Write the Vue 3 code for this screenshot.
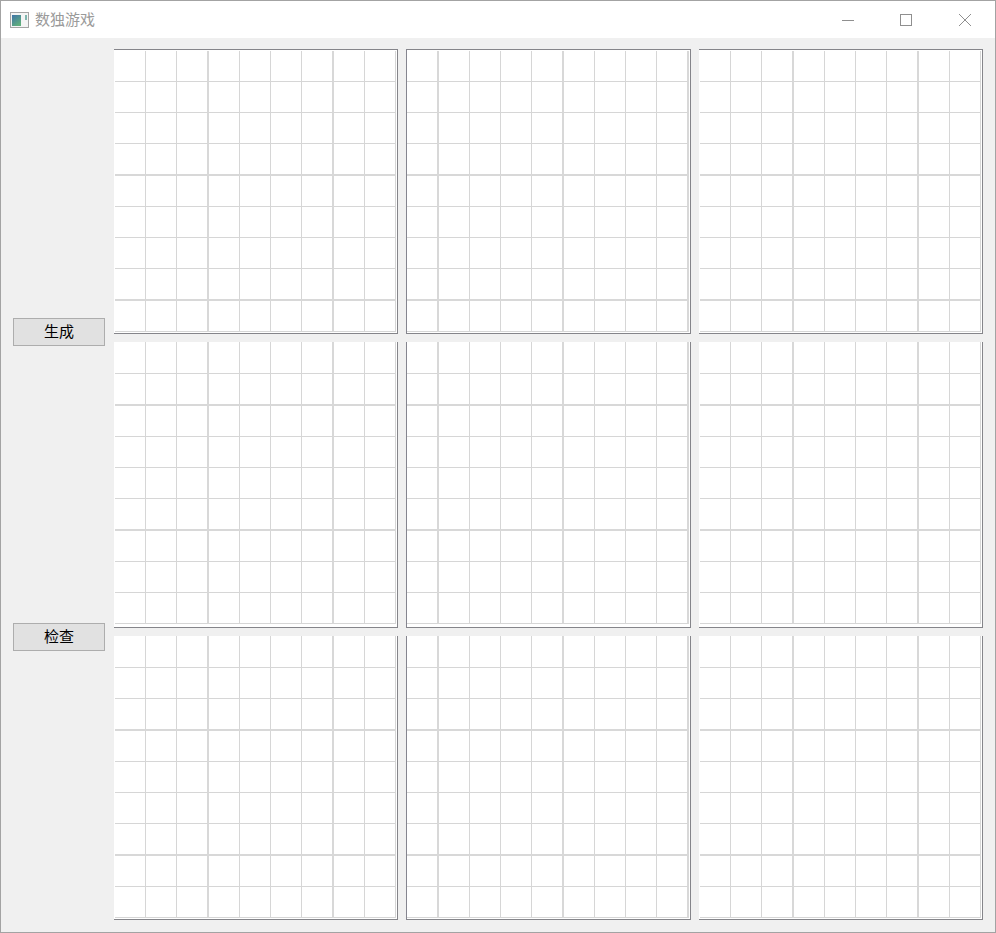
<script setup>
const colSets = [[2, 6], [0, 4, 8], [2, 6]]
const rowSets = [[3, 7], [1, 5], [2, 6]]

const tables = Array.from({ length: 9 }, (_, t) => {
  const col = t % 3
  const row = Math.floor(t / 3)
  const thickCols = colSets[col]
  const thickRows = rowSets[row]
  return {
    id: t,
    col,
    row,
    cells: Array.from({ length: 81 }, (_, i) => ({
      id: i,
      tr: thickCols.includes(i % 9),
      tb: thickRows.includes(Math.floor(i / 9)),
    })),
  }
})
</script>

<template>
  <div class="window">
    <header class="titlebar">
      <div class="title-left">
        <svg class="app-icon" width="20" height="16" viewBox="0 0 20 16">
          <defs>
            <linearGradient id="ig" x1="0" y1="0" x2="0.6" y2="1">
              <stop offset="0" stop-color="#3f73a8" />
              <stop offset="1" stop-color="#5fae7c" />
            </linearGradient>
          </defs>
          <rect x="0.5" y="0.5" width="18" height="15" fill="#f4f4f4" stroke="#a4a4a4" />
          <rect x="2" y="3" width="9" height="11" fill="url(#ig)" />
          <rect x="15" y="3" width="2" height="5" fill="#7fb5ae" />
        </svg>
        <span class="title-text">数独游戏</span>
      </div>
      <div class="controls">
        <div class="ctl">
          <svg width="14" height="14" viewBox="0 0 14 14"><path d="M1 7.5h12" stroke="#8f8f8f" fill="none" /></svg>
        </div>
        <div class="ctl">
          <svg width="14" height="14" viewBox="0 0 14 14"><rect x="1.5" y="1.5" width="11" height="11" stroke="#8f8f8f" fill="none" /></svg>
        </div>
        <div class="ctl">
          <svg width="14" height="14" viewBox="0 0 14 14"><path d="M1 1l12 12M13 1L1 13" stroke="#8f8f8f" fill="none" /></svg>
        </div>
      </div>
    </header>
    <div class="content">
      <aside class="sidebar">
        <button class="btn">生成</button>
        <button class="btn">检查</button>
      </aside>
      <main class="board">
        <section
          v-for="t in tables"
          :key="t.id"
          class="table"
          :class="['col-' + t.col, 'row-' + t.row]"
        >
          <div class="cells">
            <div
              v-for="c in t.cells"
              :key="c.id"
              class="cell"
              :class="{ tr: c.tr, tb: c.tb }"
            ></div>
          </div>
        </section>
      </main>
    </div>
  </div>
</template>

<style scoped>
.window {
  width: 996px;
  height: 933px;
  box-sizing: border-box;
  border: 1px solid #a3a3a3;
  background: #f0f0f0;
  display: flex;
  flex-direction: column;
  overflow: hidden;
  font-family: "Noto Sans CJK SC", "Liberation Sans", sans-serif;
}
.titlebar {
  height: 37px;
  flex: none;
  background: #fff;
  display: flex;
  align-items: center;
  justify-content: space-between;
}
.title-left {
  display: flex;
  align-items: center;
  padding-left: 9px;
  gap: 5px;
}
.app-icon {
  display: block;
}
.title-text {
  font-size: 15px;
  color: #9a9a9a;
  line-height: 20px;
  margin-top: -2px;
}
.controls {
  display: flex;
  padding-right: 1px;
}
.ctl {
  width: 58.5px;
  height: 37px;
  display: flex;
  align-items: center;
  justify-content: center;
}
.ctl svg {
  display: block;
}
.content {
  flex: 1;
  display: flex;
  min-height: 0;
}
.sidebar {
  width: 113px;
  flex: none;
  box-sizing: border-box;
  padding: 280px 8px 0 12px;
  display: flex;
  flex-direction: column;
  gap: 277px;
}
.btn {
  width: 92px;
  height: 28px;
  box-sizing: border-box;
  border: 1px solid #adadad;
  background: #e1e1e1;
  color: #000;
  font-family: inherit;
  font-size: 15px;
  line-height: 20px;
  padding: 0 0 2px;
  border-radius: 0;
}
.board {
  flex: 1;
  display: grid;
  grid-template-columns: 284px 285px 284px;
  grid-template-rows: 285px 286px 284px;
  gap: 8px;
  padding-top: 11px;
  align-content: start;
}
.table {
  position: relative;
  box-sizing: border-box;
  background: #fff;
  border-right: 1px solid #85858a;
  border-bottom: 1px solid #85858a;
  overflow: hidden;
}
.table.row-0 {
  border-top: 1px solid #85858a;
}
.table.col-1 {
  border-left: 1px solid #85858f;
}
/* the table's white frame, which lies over the ends of the grid lines */
.table.row-0::before {
  content: "";
  position: absolute;
  top: 0;
  left: 0;
  right: 0;
  height: 1px;
  background: #fff;
}
.table.col-0::after,
.table.col-2::after {
  content: "";
  position: absolute;
  top: 0;
  bottom: 0;
  left: 0;
  width: 1px;
  background: #fff;
}
.cells {
  display: grid;
}
.col-0 .cells,
.col-2 .cells {
  grid-template-columns: 32px 31px 32px 31px 31px 31px 32px 31px 31px;
}
.col-1 .cells {
  grid-template-columns: 32px 31px 31px 31px 32px 31px 31px 31px 32px;
}
.row-0 .cells {
  grid-template-rows: 32px 31px 31px 32px 31px 31px 31px 32px 31px;
}
.row-1 .cells {
  grid-template-rows: 32px 32px 31px 31px 31px 32px 31px 31px 31px;
}
.row-2 .cells {
  grid-template-rows: 32px 31px 32px 31px 31px 31px 32px 31px 31px;
}
.cell {
  box-sizing: border-box;
  border-right: 1px solid #d6d6d6;
  border-bottom: 1px solid #d6d6d6;
}
.cell.tr {
  border-right: 2px solid #d8d8d8;
}
.cell.tb {
  border-bottom: 2px solid #d8d8d8;
}
</style>
